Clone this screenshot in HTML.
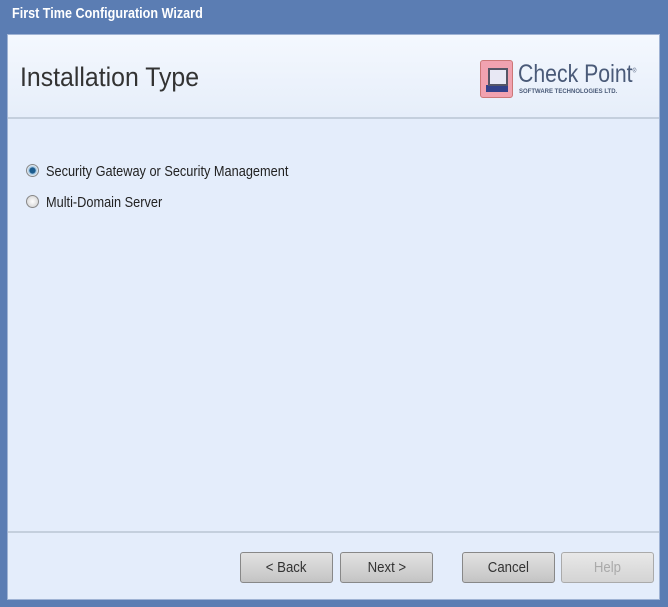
<!DOCTYPE html>
<html><head><meta charset="utf-8"><style>
*{margin:0;padding:0;box-sizing:border-box}
body{width:668px;height:607px;background:#5b7db3;font-family:"Liberation Sans",Arial,sans-serif;position:relative;overflow:hidden}
.t{position:absolute;left:12px;top:5px;color:#fff;font-weight:bold;font-size:15px;transform:scaleX(.84);transform-origin:left top;white-space:nowrap}
.in{position:absolute;left:7px;top:34px;width:653px;height:566px;background:#e4edfb;border:1px solid #9fb3d4}
.hd{position:absolute;left:0;top:0;width:651px;height:84px;background:linear-gradient(#f4f8fe,#e6eefa);border-bottom:2px solid #c4cfdd}
.h1{position:absolute;left:12px;top:27px;font-size:27px;color:#333;transform:scaleX(.92);transform-origin:left top;white-space:nowrap}
.logo{position:absolute;left:472px;top:25px;width:33px;height:38px;background:#f1a2b0;border:1px solid #c77;border-radius:3px}
.logo:after{content:"";position:absolute;left:7px;top:7px;width:16px;height:14px;background:#e8e8f4;border:2px solid #556}
.logo:before{content:"";position:absolute;left:5px;top:24px;width:22px;height:7px;background:#33418a}
.cp{position:absolute;left:510px;top:25px;font-size:25px;color:#4a5a78;transform:scaleX(.85);transform-origin:left top;white-space:nowrap}
.sw{position:absolute;left:511px;top:54px;font-size:6px;font-weight:bold;color:#4a5a78;white-space:nowrap}
.r{position:absolute;left:18px;font-size:15px;color:#222;white-space:nowrap}
.r span{display:inline-block;transform:scaleX(.85);transform-origin:left center}
.rb{position:absolute;left:0;top:1px;width:13px;height:13px;border-radius:50%;border:1px solid #888;background:radial-gradient(#fff,#ccc)}
.rb.on{background:radial-gradient(#1c5c8e 0,#1c5c8e 35%,#9fc4e0 45%,#e8eef4 70%)}
.r .lb{position:absolute;left:20px;top:0}
.ft{position:absolute;left:0;top:496px;width:651px;border-top:2px solid #c4cfdd}
.b{position:absolute;top:517px;width:93px;height:31px;border:1px solid #888;border-radius:3px;background:linear-gradient(#e2e2e2,#c4c4c4);font-size:15px;color:#333;text-align:center;line-height:29px}
.b span{display:inline-block;transform:scaleX(.88)}
.b.d{color:#aaa;border-color:#aaa;background:linear-gradient(#e8e8e8,#d4d4d4)}
</style></head><body>
<div class="t">First Time Configuration Wizard</div>
<div class="in">
 <div class="hd">
  <div class="h1">Installation Type</div>
  <div class="logo"></div>
  <div class="cp">Check Point<sup style="font-size:6px">®</sup></div>
  <div class="sw">SOFTWARE TECHNOLOGIES LTD.</div>
 </div>
 <div class="r" style="top:128px"><div class="rb on"></div><div class="lb"><span>Security Gateway or Security Management</span></div></div>
 <div class="r" style="top:159px"><div class="rb"></div><div class="lb"><span>Multi-Domain Server</span></div></div>
 <div class="ft"></div>
 <div class="b" style="left:232px"><span>&lt; Back</span></div>
 <div class="b" style="left:332px"><span>Next &gt;</span></div>
 <div class="b" style="left:454px"><span>Cancel</span></div>
 <div class="b d" style="left:553px"><span>Help</span></div>
</div>
</body></html>
